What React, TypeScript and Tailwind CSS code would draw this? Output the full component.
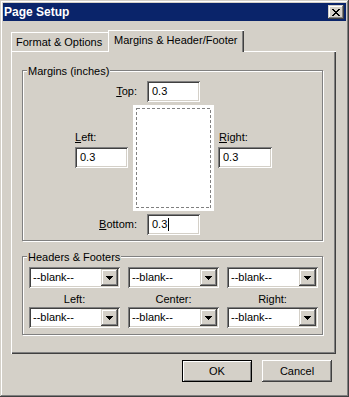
import type { ReactNode } from 'react'

const raised = 'shadow-[inset_-1px_-1px_0_#404040,inset_1px_1px_0_#d4d0c8,inset_-2px_-2px_0_#808080,inset_2px_2px_0_#ffffff]'
const sunken = 'shadow-[inset_1px_1px_0_#808080,inset_-1px_-1px_0_#ffffff,inset_2px_2px_0_#404040,inset_-2px_-2px_0_#d4d0c8]'
const etched = 'border border-[#808080] shadow-[inset_1px_1px_0_#ffffff,1px_1px_0_#ffffff]'

function Field({ className, children }: { className: string; children: ReactNode }) {
  return (
    <div className={`flex h-[21px] items-center bg-white pl-[5px] ${sunken} ${className}`}>
      {children}
    </div>
  )
}

function Key({ k, rest }: { k: string; rest: string }) {
  return (
    <span>
      <span className="underline">{k}</span>
      {rest}
    </span>
  )
}

function Drop() {
  return (
    <div className={`flex h-[21px] w-[91px] items-center bg-white ${sunken}`}>
      <span className="flex-1 pl-[4px]">--blank--</span>
      <div className={`mr-[2px] flex h-[17px] w-[17px] items-center justify-center bg-[#d4d0c8] ${raised}`}>
        <svg width="7" height="4" viewBox="0 0 7 4" shapeRendering="crispEdges">
          <rect x="0" y="0" width="7" height="1" fill="#000" />
          <rect x="1" y="1" width="5" height="1" fill="#000" />
          <rect x="2" y="2" width="3" height="1" fill="#000" />
          <rect x="3" y="3" width="1" height="1" fill="#000" />
        </svg>
      </div>
    </div>
  )
}

export default function App() {
  return (
    <div className="h-[397px] w-[349px] bg-[#d4d0c8] p-[3px] font-['Liberation_Sans',Arial,sans-serif] text-[11px] leading-[13px] text-black shadow-[inset_-1px_-1px_0_#404040,inset_1px_1px_0_#d4d0c8,inset_-2px_-2px_0_#808080,inset_2px_2px_0_#ffffff]">
      {/* title bar */}
      <div className="flex h-[18px] items-center justify-between bg-[#0a246a] pl-[1px] pr-[2px]">
        <span className="text-[12px] font-bold text-white">Page Setup</span>
        <div className={`flex h-[14px] w-[16px] items-center justify-center bg-[#d4d0c8] ${raised}`}>
          <svg width="8" height="7" viewBox="0 0 8 7" shapeRendering="crispEdges">
            <path d="M0 0h2v1H0zM6 0h2v1H6zM1 1h2v1H1zM5 1h2v1H5zM2 2h4v1H2zM3 3h2v1H3zM2 4h4v1H2zM1 5h2v1H1zM5 5h2v1H5zM0 6h2v1H0zM6 6h2v1H6z" fill="#000" />
          </svg>
        </div>
      </div>

      <div className="pl-[8px]">
        {/* tabs */}
        <div className="mt-[9px] flex h-[21px] items-end">
          <div className="flex h-[19px] w-[97px] items-center border-l border-t border-white pl-[4px]">
            Format &amp; Options
          </div>
          <div className="relative z-10 -mb-px flex h-[22px] w-[136px] items-center border-l border-t border-white bg-[#d4d0c8] pb-[2px] pl-[5px] shadow-[inset_-1px_0_0_#404040,inset_-2px_0_0_#808080]">
            Margins &amp; Header/Footer
          </div>
        </div>

        {/* tab panel */}
        <div className="flex h-[303px] w-[325px] flex-col border-l border-t border-white shadow-[inset_-1px_-1px_0_#404040,inset_-2px_-2px_0_#808080]">
          {/* Margins */}
          <div className={`ml-[10px] mt-[18px] h-[171px] w-[301px] ${etched}`}>
            <div className="-mt-[6px] ml-[4px] w-fit bg-[#d4d0c8] px-[1px]">Margins (inches)</div>
            <div className="mt-[3px] flex h-[21px] items-center">
              <div className="w-[114px] text-right">
                <Key k="T" rest="op:" />
              </div>
              <Field className="ml-[10px] w-[53px]">0.3</Field>
            </div>
            <div className="mt-[3px] flex h-[106px]">
              <div className="w-[110px] pl-[52px] pt-[26px]">
                <Key k="L" rest="eft:" />
                <Field className="mt-[3px] w-[53px]">0.3</Field>
              </div>
              <div className="h-[106px] w-[81px] bg-white p-[3px]">
                <svg width="75" height="100" viewBox="0 0 75 100" shapeRendering="crispEdges">
                  <rect x="0.5" y="0.5" width="74" height="99" fill="none" stroke="#808080" strokeDasharray="3 2" />
                </svg>
              </div>
              <div className="pl-[4px] pt-[26px]">
                <div className="pl-px">
                  <Key k="R" rest="ight:" />
                </div>
                <Field className="mt-[3px] w-[54px]">0.3</Field>
              </div>
            </div>
            <div className="mt-[3px] flex h-[21px] items-center">
              <div className="w-[114px] text-right">
                <Key k="B" rest="ottom:" />
              </div>
              <Field className="ml-[10px] w-[53px]">
                0.3
                <span className="ml-px h-[13px] w-px bg-black" />
              </Field>
            </div>
          </div>

          {/* Headers & Footers */}
          <div className={`ml-[10px] mt-[15px] h-[79px] w-[301px] ${etched}`}>
            <div className="-mt-[6px] ml-[4px] w-fit bg-[#d4d0c8] px-[1px]">Headers &amp; Footers</div>
            <div className="mt-[3px] flex gap-[8px] pl-[6px]">
              <Drop />
              <Drop />
              <Drop />
            </div>
            <div className="mt-[5px] flex gap-[8px] pl-[6px]">
              <div className="w-[91px] text-center">Left:</div>
              <div className="w-[91px] text-center">Center:</div>
              <div className="w-[91px] text-center">Right:</div>
            </div>
            <div className="mt-[1px] flex gap-[8px] pl-[6px]">
              <Drop />
              <Drop />
              <Drop />
            </div>
          </div>
        </div>

        {/* buttons */}
        <div className="mt-[6px] flex w-[325px] justify-end gap-[10px] pr-[4px]">
          <button className="h-[22px] w-[70px] border border-black bg-[#d4d0c8] shadow-[inset_1px_1px_0_#ffffff,inset_-1px_-1px_0_#808080]">
            OK
          </button>
          <button className="h-[22px] w-[70px] bg-[#d4d0c8] shadow-[inset_-1px_-1px_0_#404040,inset_1px_1px_0_#ffffff,inset_-2px_-2px_0_#808080]">
            Cancel
          </button>
        </div>
      </div>
    </div>
  )
}
